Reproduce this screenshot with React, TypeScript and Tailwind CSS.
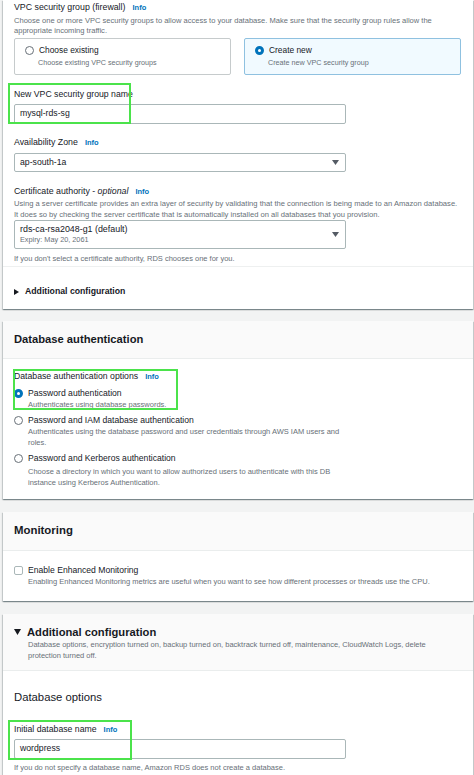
import React from "react";

const F = { fontFamily: '"Liberation Sans", Arial, sans-serif' };

function Info() {
  return <span className="ml-[7px] text-[7.5px] font-bold text-[#0073bb]">Info</span>;
}

function Radio({ on }: { on?: boolean }) {
  return on ? (
    <span className="inline-block h-[9px] w-[9px] shrink-0 rounded-full border-[3px] border-[#0073bb] bg-white" />
  ) : (
    <span className="inline-block h-[9px] w-[9px] shrink-0 rounded-full border border-[#687078] bg-white" />
  );
}

function Caret() {
  return (
    <svg width="7" height="5" viewBox="0 0 7 5" className="shrink-0">
      <path d="M0 0 L7 0 L3.5 5 Z" fill="#545b64" />
    </svg>
  );
}

const panelCls =
  "ml-[3px] mr-[1px] bg-white shadow-[0_1px_1px_0_rgba(0,28,36,0.3),1px_1px_1px_0_rgba(0,28,36,0.15),-1px_1px_1px_0_rgba(0,28,36,0.15)]";

function Green({ cls }: { cls: string }) {
  return <div className={"pointer-events-none absolute border-2 border-[#4be34b] " + cls} />;
}

export default function App() {
  return (
    <div style={F} className="relative h-[775px] w-[474px] overflow-hidden bg-[#f2f3f3] text-[#16191f]">
      {/* Top panel */}
      <div className={panelCls + " px-[11px] pt-[2px] pb-[12px]"}>
        <div className="flex items-center text-[8.8px] leading-[11px]">
          VPC security group (firewall)
          <Info />
        </div>
        <div className="mt-[3px] whitespace-nowrap text-[7.55px] leading-[10px] text-[#687078]">
          Choose one or more VPC security groups to allow access to your database. Make sure that the security group rules allow the
          <br />
          appropriate incoming traffic.
        </div>
        <div className="mt-[2px] grid grid-cols-[217px_217px] gap-[13px]">
          <div className="h-[37px] rounded-[2px] border border-[#c6cbcc] bg-white pl-[10px] pt-[6px]">
            <div className="flex items-center gap-[5px] text-[8.4px] leading-[11px]">
              <Radio />
              Choose existing
            </div>
            <div className="mt-[1px] pl-[13px] text-[7.2px] leading-[11px] text-[#687078]">Choose existing VPC security groups</div>
          </div>
          <div className="h-[37px] rounded-[2px] border border-[#8fc1e0] bg-[#f1faff] pl-[10px] pt-[6px]">
            <div className="flex items-center gap-[5px] text-[8.4px] leading-[11px]">
              <Radio on />
              Create new
            </div>
            <div className="mt-[1px] pl-[13px] text-[7.2px] leading-[11px] text-[#687078]">Create new VPC security group</div>
          </div>
        </div>

        <div className="mt-[14px] text-[8.7px] leading-[11px]">New VPC security group name</div>
        <div className="mt-[4px] flex h-[20px] w-[332px] items-center rounded-[2px] border border-[#aab7b8] bg-white pl-[5px] text-[8.7px]">
          mysql-rds-sg
        </div>

        <div className="mt-[13px] flex items-center text-[8.8px] leading-[11px]">
          Availability Zone
          <Info />
        </div>
        <div className="mt-[5px] flex h-[19px] w-[332px] items-center justify-between rounded-[2px] border border-[#aab7b8] bg-white pl-[5px] pr-[6px] text-[8.7px]">
          ap-south-1a
          <Caret />
        </div>

        <div className="mt-[14px] flex items-center text-[8.8px] leading-[11px]">
          Certificate authority -&nbsp;<i>optional</i>
          <Info />
        </div>
        <div className="mt-[1px] whitespace-nowrap text-[7.6px] leading-[11px] text-[#687078]">
          Using a server certificate provides an extra layer of security by validating that the connection is being made to an Amazon database.
          <br />
          It does so by checking the server certificate that is automatically installed on all databases that you provision.
        </div>
        <div className="flex h-[29px] w-[332px] items-center justify-between rounded-[2px] border border-[#aab7b8] bg-white pl-[5px] pr-[6px]">
          <div>
            <div className="text-[8.9px] leading-[11px]">rds-ca-rsa2048-g1 (default)</div>
            <div className="text-[7.3px] leading-[10px] text-[#687078]">Expiry: May 20, 2061</div>
          </div>
          <Caret />
        </div>
        <div className="mt-[4px] text-[7.5px] leading-[11px] text-[#687078]">
          If you don't select a certificate authority, RDS chooses one for you.
        </div>
        <div className="-mx-[11px] mt-[2px] border-t border-[#eef0f0]" />
        <div className="mt-[19px] flex items-center gap-[6px] text-[8.7px] font-bold leading-[11px] text-[#16191f]">
          <svg width="5" height="6" viewBox="0 0 5 6">
            <path d="M0 0 L5 3 L0 6 Z" fill="#16191f" />
          </svg>
          Additional configuration
        </div>
      </div>

      {/* Database authentication */}
      <div className={panelCls + " mt-[12px]"}>
        <div className="flex h-[38px] items-center border-b border-[#eaeded] bg-[#fafafa] px-[11px] text-[11.2px] font-bold">
          Database authentication
        </div>
        <div className="px-[11px] pt-[12px] pb-[11px]">
          <div className="flex items-center text-[8.7px] leading-[11px]">
            Database authentication options
            <Info />
          </div>
          <div className="mt-[6px] flex items-center gap-[5px] text-[8.6px] leading-[11px]">
            <Radio on />
            Password authentication
          </div>
          <div className="pl-[14px] text-[7.5px] leading-[11px] text-[#687078]">Authenticates using database passwords.</div>

          <div className="mt-[5px] flex items-center gap-[5px] text-[8.6px] leading-[11px]">
            <Radio />
            Password and IAM database authentication
          </div>
          <div className="whitespace-nowrap pl-[14px] text-[7.5px] leading-[11px] text-[#687078]">
            Authenticates using the database password and user credentials through AWS IAM users and
            <br />
            roles.
          </div>

          <div className="mt-[5px] flex items-center gap-[5px] text-[8.6px] leading-[11px]">
            <Radio />
            Password and Kerberos authentication
          </div>
          <div className="mt-[2px] whitespace-nowrap pl-[14px] text-[7.5px] leading-[11px] text-[#687078]">
            Choose a directory in which you want to allow authorized users to authenticate with this DB
            <br />
            instance using Kerberos Authentication.
          </div>
        </div>
      </div>

      {/* Monitoring */}
      <div className={panelCls + " mt-[13px]"}>
        <div className="flex h-[39px] items-center border-b border-[#eaeded] bg-[#fafafa] px-[11px] text-[11.4px] font-bold">
          Monitoring
        </div>
        <div className="px-[11px] pt-[14px] pb-[14px]">
          <div className="flex items-center gap-[5px] text-[8.6px] leading-[11px]">
            <span className="inline-block h-[9px] w-[9px] rounded-[2px] border border-[#aab7b8] bg-white" />
            Enable Enhanced Monitoring
          </div>
          <div className="pl-[14px] text-[7.5px] leading-[11px] text-[#687078]">
            Enabling Enhanced Monitoring metrics are useful when you want to see how different processes or threads use the CPU.
          </div>
        </div>
      </div>

      {/* Additional configuration */}
      <div className={panelCls + " mt-[13px]"}>
        <div className="h-[57px] border-b border-[#eaeded] bg-[#fafafa] px-[11px] pt-[11px]">
          <div className="flex items-center gap-[6px] text-[11.2px] font-bold leading-[14px]">
            <svg width="7" height="6" viewBox="0 0 7 6">
              <path d="M0 0 L7 0 L3.5 6 Z" fill="#16191f" />
            </svg>
            Additional configuration
          </div>
          <div className="whitespace-nowrap pl-[14px] text-[7.5px] leading-[11px] text-[#687078]">
            Database options, encryption turned on, backup turned on, backtrack turned off, maintenance, CloudWatch Logs, delete
            <br />
            protection turned off.
          </div>
        </div>
        <div className="px-[11px] pt-[19px] pb-[20px]">
          <div className="text-[11.3px] leading-[14px]">Database options</div>
          <div className="mt-[20px] flex items-center text-[8.7px] leading-[11px]">
            Initial database name
            <Info />
          </div>
          <div className="mt-[4px] flex h-[20px] w-[332px] items-center rounded-[2px] border border-[#aab7b8] bg-white pl-[5px] text-[8.7px]">
            wordpress
          </div>
          <div className="mt-[3px] text-[7.5px] leading-[11px] text-[#687078]">
            If you do not specify a database name, Amazon RDS does not create a database.
          </div>
        </div>
      </div>

      <Green cls="left-[8px] top-[83px] h-[41px] w-[123px]" />
      <Green cls="left-[13px] top-[369px] h-[41px] w-[165px]" />
      <Green cls="left-[8px] top-[720px] h-[40px] w-[124px]" />
    </div>
  );
}
